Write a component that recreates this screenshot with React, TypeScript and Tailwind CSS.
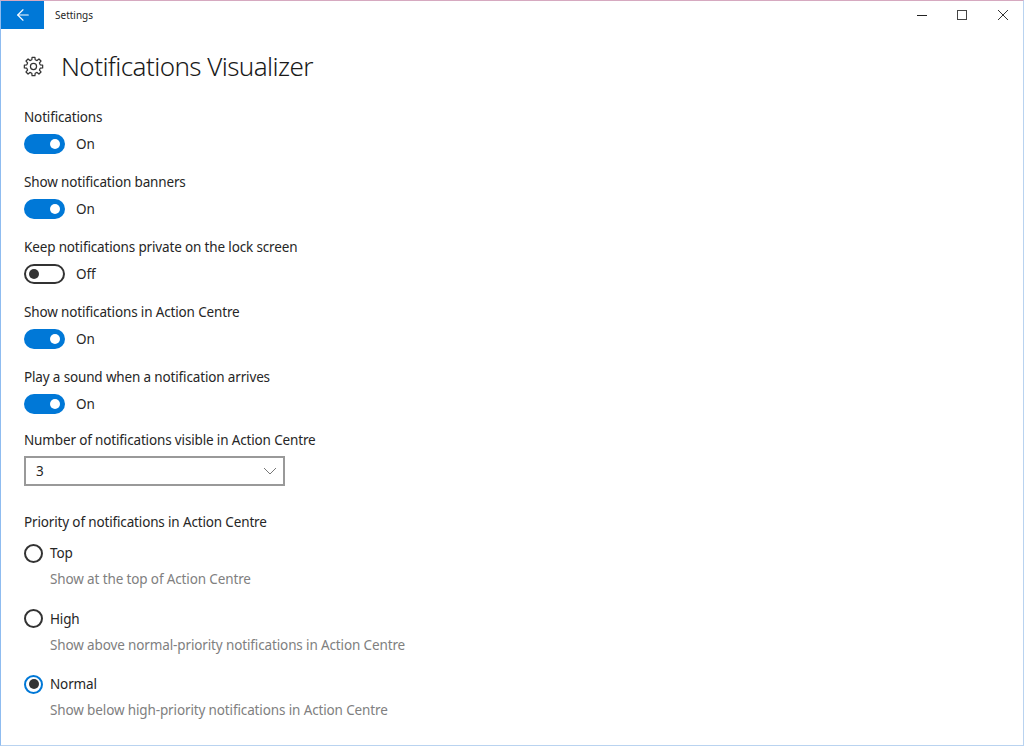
import { ArrowLeft } from 'lucide-react';

// eight squared teeth, the settings glyph from the window's header
function gearPath() {
    const outer = 10.6;
    const inner = 7.9;
    const points: string[] = [];
    for (let k = 0; k < 8; k++) {
        const a = k * 45;
        const spots: [number, number][] = [
            [inner, a - 14],
            [outer, a - 9],
            [outer, a + 9],
            [inner, a + 14],
        ];
        for (const [r, deg] of spots) {
            const rad = (deg * Math.PI) / 180;
            points.push(`${(12 + r * Math.sin(rad)).toFixed(2)} ${(12 - r * Math.cos(rad)).toFixed(2)}`);
        }
    }
    return `M${points.join('L')}Z`;
}

function Toggle({ label, on }: { label: string; on: boolean }) {
    return (
        <div className="flex h-[65px] flex-col">
            <div className="flex h-[28px] items-center">{label}</div>
            <div className="mt-[3px] flex h-[20px] items-center gap-[11px]">
                {on ? (
                    <div className="flex h-[20px] w-[41px] items-center justify-end rounded-full bg-[#0078d7] pr-[5px]">
                        <div className="h-[10px] w-[10px] rounded-full bg-white" />
                    </div>
                ) : (
                    <div className="flex h-[20px] w-[41px] items-center rounded-full border-2 border-[#333333] bg-white pl-[3px]">
                        <div className="h-[10px] w-[10px] rounded-full bg-[#333333]" />
                    </div>
                )}
                <span>{on ? 'On' : 'Off'}</span>
            </div>
        </div>
    );
}

function Radio({ label, hint, checked }: { label: string; hint: string; checked?: boolean }) {
    return (
        <div className="flex h-[65.5px] flex-col">
            <div className="flex h-[20px] items-center gap-[7px]">
                {checked ? (
                    <div className="flex h-[19px] w-[19px] items-center justify-center rounded-full border-2 border-[#0078d7]">
                        <div className="h-[10px] w-[10px] rounded-full bg-[#333333]" />
                    </div>
                ) : (
                    <div className="h-[19px] w-[19px] rounded-full border-2 border-[#333333]" />
                )}
                <span>{label}</span>
            </div>
            <div className="mt-[6px] ml-[26px] tracking-[-0.13px] text-[#808080]">{hint}</div>
        </div>
    );
}

export default function App() {
    return (
        <div className="flex h-[746px] w-[1024px] flex-col overflow-hidden border border-t-[#d6a9c0] border-r-[#b9d3f0] border-b-[#b9d3f0] border-l-[#8fbcf0] bg-white font-['Noto_Sans','Open_Sans',sans-serif] text-[13.5px] tracking-[-0.15px] text-[#262626]">
            <div className="flex h-[28px] items-center">
                <div className="flex h-[28px] w-[43px] items-center justify-center bg-[#0078d7] text-white">
                    <ArrowLeft size={18} strokeWidth={1.5} />
                </div>
                <div className="ml-[11px] text-[10px] tracking-normal">Settings</div>
                <div className="ml-auto flex items-center">
                    <div className="flex h-[28px] w-[40.5px] items-center justify-center">
                        <div className="h-px w-[10px] bg-[#222222]" />
                    </div>
                    <div className="flex h-[28px] w-[40.5px] items-center justify-center">
                        <div className="h-[10px] w-[10px] border border-[#444444]" />
                    </div>
                    <div className="flex h-[28px] w-[40.5px] items-center justify-center">
                        <svg width="10" height="10" viewBox="0 0 10 10" stroke="#333333" strokeWidth="1">
                            <path d="M0 0 10 10M10 0 0 10" />
                        </svg>
                    </div>
                </div>
            </div>

            <div className="flex flex-col pl-[23px]">
                <div className="mt-[17px] flex h-[40px] items-center">
                    <svg className="-ml-px" width="21" height="21" viewBox="0 0 24 24" fill="none" stroke="#333333" strokeWidth="1.4" strokeLinejoin="round">
                        <path d={gearPath()} />
                        <circle cx="12" cy="12" r="3.5" />
                    </svg>
                    <h1 className="ml-[17px] text-[26px] font-light tracking-[-0.58px] text-[#1a1a1a]">Notifications Visualizer</h1>
                </div>

                <div className="mt-[17px] flex flex-col">
                    <Toggle label="Notifications" on />
                    <Toggle label="Show notification banners" on />
                    <Toggle label="Keep notifications private on the lock screen" on={false} />
                    <Toggle label="Show notifications in Action Centre" on />
                    <Toggle label="Play a sound when a notification arrives" on />
                </div>

                <div className="-mt-px flex h-[26px] items-center">Number of notifications visible in Action Centre</div>
                <div className="mt-[3px] flex h-[30px] w-[261px] items-center justify-between border-2 border-[#999999] pr-[6px] pl-[10px]">
                    <span>3</span>
                    <svg width="14" height="8" viewBox="0 0 14 8" fill="none" stroke="#777777" strokeWidth="1">
                        <path d="M1 1l6 6 6-6" />
                    </svg>
                </div>

                <div className="mt-[23px] flex h-[26px] items-center">Priority of notifications in Action Centre</div>
                <div className="mt-[8.3px] flex flex-col">
                    <Radio label="Top" hint="Show at the top of Action Centre" />
                    <Radio label="High" hint="Show above normal-priority notifications in Action Centre" />
                    <Radio label="Normal" hint="Show below high-priority notifications in Action Centre" checked />
                </div>
            </div>
        </div>
    );
}
